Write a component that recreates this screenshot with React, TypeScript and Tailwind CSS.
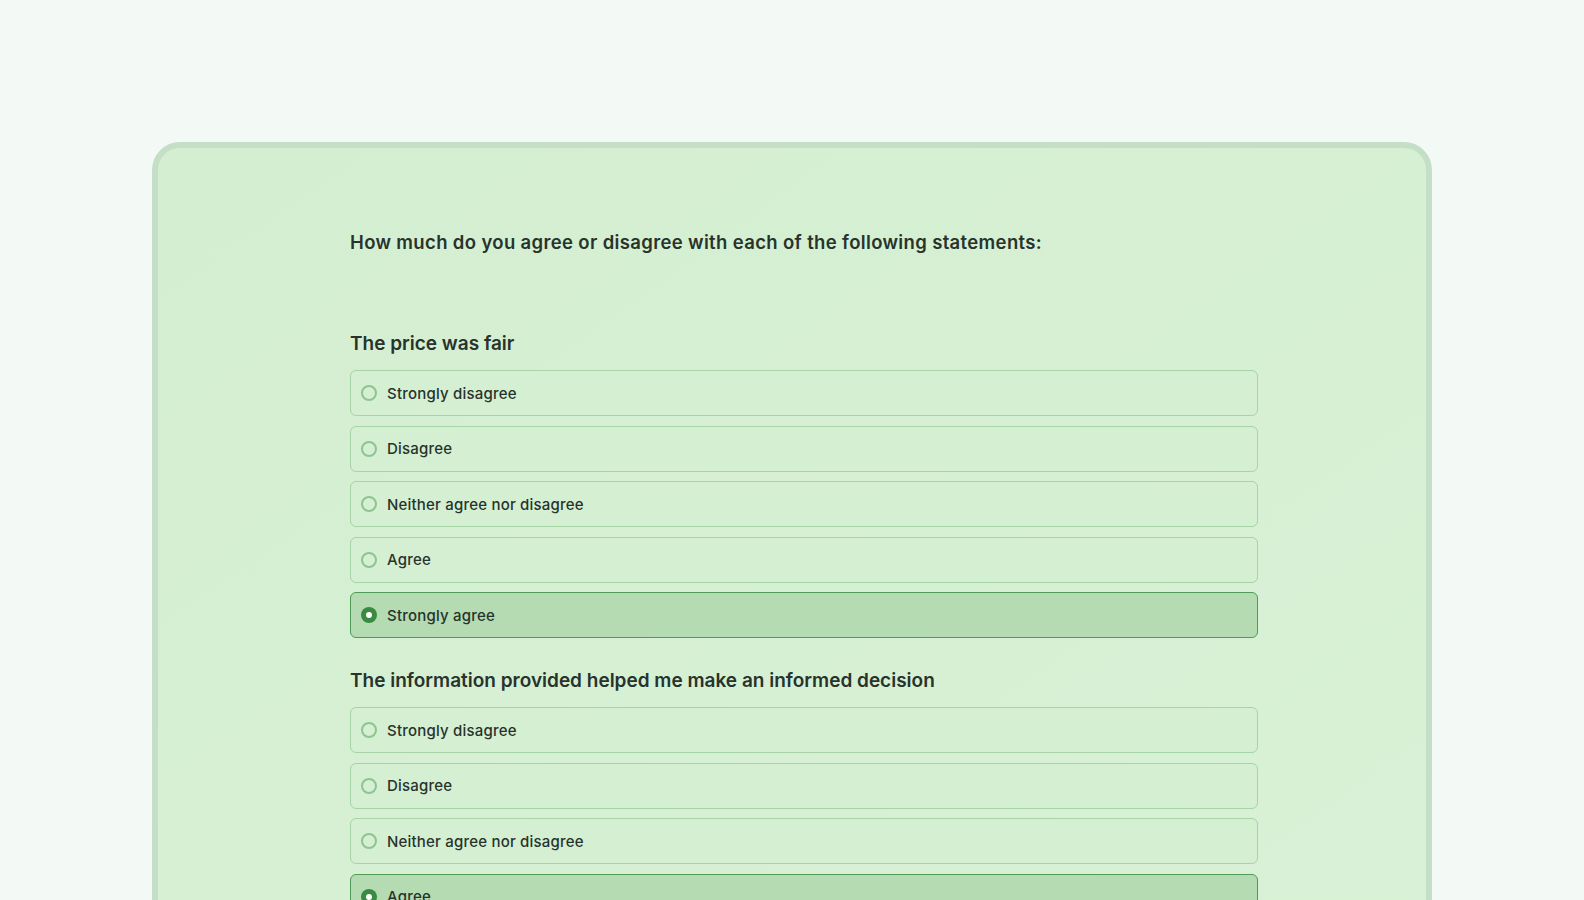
import React from "react";

type Question = {
  title: string;
  selected: string;
};

const OPTIONS = ["Strongly disagree", "Disagree", "Neither agree nor disagree", "Agree", "Strongly agree"];

const QUESTIONS: Question[] = [
  { title: "The price was fair", selected: "Strongly agree" },
  { title: "The information provided helped me make an informed decision", selected: "Agree" },
];

function Option({ label, checked }: { label: string; checked: boolean }) {
  return (
    <label
      className={
        checked
          ? "flex items-center gap-[10px] h-[46px] px-[10px] rounded-[6px] border border-[#4f9a56] bg-[#b4dbb1] cursor-pointer"
          : "flex items-center gap-[10px] h-[46px] px-[10px] rounded-[6px] border border-[#a6d4a5] bg-[#d5efd2] cursor-pointer"
      }
    >
      {checked ? (
        <span className="w-4 h-4 rounded-full bg-[#3a8a41] flex items-center justify-center shrink-0">
          <span className="w-[6px] h-[6px] rounded-full bg-white" />
        </span>
      ) : (
        <span className="w-4 h-4 rounded-full border-2 border-[#8fc491] shrink-0" />
      )}
      <span className="text-[15px] tracking-[0.2px] font-medium text-[#27332c] leading-none">{label}</span>
    </label>
  );
}

export default function App() {
  return (
    <div className="min-h-screen bg-[#f3f9f5] pt-[142px] font-['Inter',sans-serif] overflow-hidden">
      <div className="mx-auto w-[1280px] h-[900px] rounded-[28px] border-[6px] border-[#c4dfc5] bg-gradient-to-br from-[#d4eed1] to-[#d9f2d7]">
        <div className="ml-[192px] w-[908px] pt-[80px]">
          <h1 className="text-[18.5px] tracking-[0.35px] leading-[28px] font-semibold text-[#27332c]">
            How much do you agree or disagree with each of the following statements:
          </h1>

          <div className="mt-[74px] flex flex-col gap-[29px]">
            {QUESTIONS.map((q) => (
              <section key={q.title}>
                <h2 className="text-[19px] leading-[28px] font-semibold text-[#27332c] mb-[12px]">{q.title}</h2>
                <div className="flex flex-col gap-[9.5px]">
                  {OPTIONS.map((o) => (
                    <Option key={o} label={o} checked={o === q.selected} />
                  ))}
                </div>
              </section>
            ))}
          </div>
        </div>
      </div>
    </div>
  );
}
